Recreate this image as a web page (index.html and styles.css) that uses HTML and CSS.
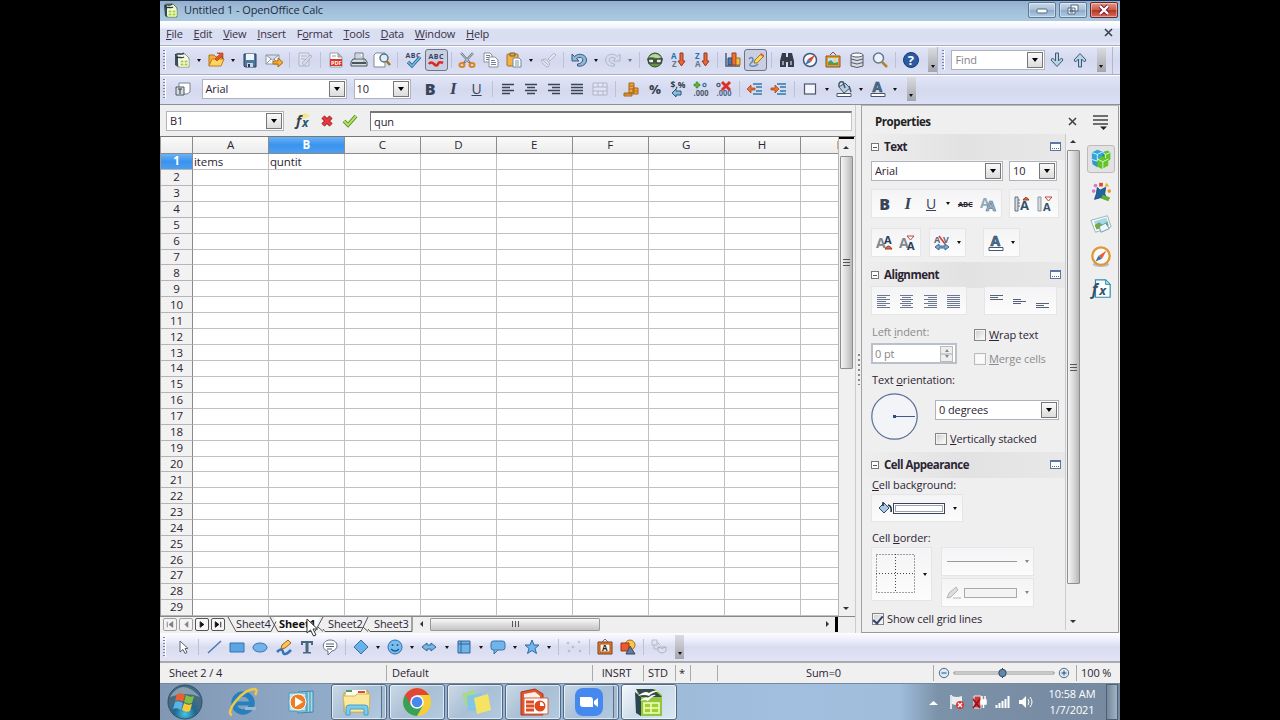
FILE: index.html
```html
<!DOCTYPE html>
<html lang="en">
<head>
    <meta charset="UTF-8">
    <meta name="viewport" content="width=device-width, initial-scale=1.0">
    <title>Untitled 1 - OpenOffice Calc</title>
    <link rel="stylesheet" href="styles.css">
</head>
<body>
<div class="window">
    <!-- Title bar -->
    <header class="titlebar">
        <svg class="app-icon" width="14" height="16" viewBox="0 0 14 16"><path d="M1 2h8l4 4v9H3z" fill="#eef3dc" stroke="#69813b"/><path d="M0 3l3 1v11l-2-1z" fill="#344b55"/><path d="M1 4c3-3 4 1 7-2M2 6c3-2 4 1 7-1" stroke="#273440" fill="none" stroke-width="1.4"/><path d="M4 8h8v6H4zM4 11h8M8 8v6" fill="#a8d431" stroke="#f9ffe0"/></svg>
        <span class="title">Untitled 1 - OpenOffice Calc</span>
        <div class="win-buttons">
            <div class="win-btn"><svg width="12" height="8" viewBox="0 0 12 8"><rect x="1" y="3" width="10" height="4" rx="1" fill="#fff" stroke="#53677c"/></svg></div>
            <div class="win-btn"><svg width="14" height="12" viewBox="0 0 14 12"><path d="M5 1h7v6H5zM2 4h7v6H2z" fill="#f7fbff" stroke="#53677c"/><path d="M4 6h3v2H4z" fill="#7691ac" stroke="#53677c"/></svg></div>
            <div class="win-btn close"><svg width="12" height="10" viewBox="0 0 12 10"><path d="M2 1l8 8M10 1L2 9" stroke="#713" stroke-width="4"/><path d="M2 1l8 8M10 1L2 9" stroke="#fff" stroke-width="2.4"/></svg></div>
        </div>
    </header>

    <!-- Menu -->
    <nav class="menubar">
        <a><u>F</u>ile</a><a><u>E</u>dit</a><a><u>V</u>iew</a><a><u>I</u>nsert</a><a>F<u>o</u>rmat</a><a><u>T</u>ools</a><a><u>D</u>ata</a><a><u>W</u>indow</a><a><u>H</u>elp</a>
        <svg class="doc-close" width="9" height="9" viewBox="0 0 9 9"><path d="M1 1l7 7M8 1L1 8" stroke="#3d4054" stroke-width="1.6"/></svg>
    </nav>

    <!-- Standard toolbar -->
    <div class="toolbar standard">
        <span class="grip"></span>
        <span class="ic"><svg viewBox="0 0 20 20"><path d="M5 4h8l4 4v9H6z" fill="#f4f8e8" stroke="#8b9b6c"/><path d="M3 4l3 2v11l-3-2z" fill="#3c5058"/><path d="M3 5c4-3 5 1 9-2M4 8c3-2 5 1 8-1" stroke="#2d3b45" fill="none" stroke-width="1.3"/><path d="M8 10h8v6H8zM8 13h8M12 10v6" fill="#a7cc38" stroke="#fff"/></svg></span><span class="dd"></span>
        <span class="ic"><svg viewBox="0 0 20 20"><path d="M3 16V5h5l2 2h6v3" fill="#f1b23c" stroke="#b3731c"/><path d="M3 16l3-7h12l-3 7z" fill="#ffd45c" stroke="#bd7c1c"/><path d="M9 9l5-5-3-1h6v6l-1-3-5 5z" fill="#e3562b" stroke="#a83416" stroke-width=".6"/></svg></span><span class="dd"></span>
        <span class="ic"><svg viewBox="0 0 20 20"><path d="M4 4h12v13H5l-1-1z" fill="#4e789f" stroke="#243f5d"/><path d="M6 4h8v6H6z" fill="#edf4fa"/><path d="M7 13h6v4H7z" fill="#cbd6e2"/><path d="M8 14h2v3H8z" fill="#223a57"/></svg></span>
        <span class="ic"><svg viewBox="0 0 20 20"><path d="M2 5h13v9H2zM2 5l6.500 5L15 5M2 14l5-5M15 14l-5-5" fill="#fbfcfd" stroke="#8a94a3"/><path d="M9 11h5V8l5 4.500-5 4.500v-3H9z" fill="#f6ae31" stroke="#a7651b"/></svg></span><span class="sep"></span>
        <span class="ic off"><svg viewBox="0 0 20 20"><path d="M4 3h10v13H4zM6 6h6M6 9h4" fill="#e8ebf2" stroke="#878da0"/><path d="M7 13l2 3 8-10-2-1z" fill="#d6d9e1" stroke="#888ea0"/></svg></span><span class="sep"></span>
        <span class="ic"><svg viewBox="0 0 20 20"><path d="M4 3h8l4 4v10H4z" fill="#fff" stroke="#98a0ac"/><path d="M12 3v4h4zM6 6h4" fill="#b5bdc9" stroke="#949ba7"/><path d="M4 9h12v7H4z" fill="#dc3529"/><text x="5" y="14.800" font-size="5.500" font-weight="bold" fill="#fff">PDF</text></svg></span>
        <span class="ic"><svg viewBox="0 0 20 20"><path d="M6 3h8v7H6z" fill="#fff" stroke="#657384"/><path d="M7 5h5M7 7h6" stroke="#9babbb"/><path d="M4 9h12l2 3v4H2v-4z" fill="#d7dce2" stroke="#48535f"/><path d="M3 13h14" stroke="#48535f" stroke-width="2"/><circle cx="15" cy="11" r=".8" fill="#65b43b"/></svg></span>
        <span class="ic"><svg viewBox="0 0 20 20"><path d="M4 3h9v14H2V5z" fill="#fff" stroke="#7d8998"/><circle cx="12" cy="8" r="4" fill="#dceef9" stroke="#5e7180" stroke-width="1.5"/><path d="M14.500 11l3.500 4" stroke="#a1702c" stroke-width="2.500"/></svg></span><span class="sep"></span>
        <span class="ic"><svg viewBox="0 0 20 20"><text x="2.500" y="8" font-size="7" font-weight="bold" fill="#31435e" textLength="15">ABC</text><path d="M5 12l4 4 8-9" fill="none" stroke="#27608f" stroke-width="3.200"/><path d="M5 12l4 4 8-9" fill="none" stroke="#78b8e5" stroke-width="1.600"/></svg></span>
        <span class="ic pressed"><svg viewBox="0 0 20 20"><text x="2.500" y="9" font-size="7" font-weight="bold" fill="#31435e" textLength="15">ABC</text><path d="M3 14q2-3 5 0t4 0 5-1" fill="none" stroke="#d92b23" stroke-width="2.600"/></svg></span><span class="sep"></span>
        <span class="ic"><svg viewBox="0 0 20 20"><path d="M4 3l10 11M16 3L6 14" stroke="#637181" stroke-width="2.200"/><path d="M4 3l8 9M16 3l-8 9" stroke="#e4e9ed" stroke-width=".8"/><ellipse cx="5" cy="15" rx="2.500" ry="2" fill="none" stroke="#df8225" stroke-width="2"/><ellipse cx="15" cy="15" rx="2.500" ry="2" fill="none" stroke="#df8225" stroke-width="2"/></svg></span>
        <span class="ic"><svg viewBox="0 0 20 20"><path d="M3 3h6l2 2v7H3z" fill="#fff" stroke="#87909d"/><path d="M5 5.500h4M5 7.500h4M5 9.500h4" stroke="#71849a"/><path d="M8 7h6l3 3v7H8z" fill="#fff" stroke="#87909d"/><path d="M10 10.500h4M10 12.500h5M10 14.500h5" stroke="#71849a"/></svg></span>
        <span class="ic"><svg viewBox="0 0 20 20"><rect x="3" y="4" width="11" height="12" rx="1" fill="#f3b344" stroke="#a37022"/><path d="M6 3h5v3H6z" fill="#d1a454" stroke="#7e6030"/><path d="M9 8h6l2 2v7H9z" fill="#fff" stroke="#728a9c"/><path d="M11 11h4M11 13h4M11 15h4" stroke="#7798ae"/></svg></span><span class="dd"></span>
        <span class="ic off"><svg viewBox="0 0 20 20"><path d="M16 3l2 2-6 6-2-2zM3 10l5-1 4 5-2 3c-3 0-5-3-7-7zM5 10l5 5" fill="#e7e9ef" stroke="#8d93a2"/></svg></span><span class="sep"></span>
        <span class="ic"><svg viewBox="0 0 20 20"><path d="M3 4v7h7L7.500 8.500C11 6 15 8 13.500 11c-1 2-3 3-5 3v2c5 1 9-2 9-6 0-5-7-8-12-3.500z" fill="#8eb9dc" stroke="#36567b"/></svg></span><span class="dd"></span>
        <span class="ic off"><svg viewBox="0 0 20 20"><path d="M17 4v7h-7l2.500-2.500C9 6 5 8 6.500 11c1 2 3 3 5 3v2c-5 1-9-2-9-6 0-5 7-8 12-3.500z" fill="#d8dde6" stroke="#8792a4"/></svg></span><span class="dd off"></span><span class="sep"></span>
        <span class="ic"><svg viewBox="0 0 20 20"><circle cx="10" cy="10" r="7" fill="#65943f" stroke="#374d3b"/><path d="M4 7q6-6 12 0l-3 2-5-2z" fill="#bcd6a2"/><path d="M3 9h6v4H4zM11 9h6l-1 4h-5zM8 11h4" fill="#e9efed" stroke="#38493d" stroke-width="1.400"/></svg></span>
        <span class="ic"><svg viewBox="0 0 20 20"><text x="3" y="9" font-size="8" font-weight="bold" fill="#2574ae">A</text><text x="4" y="17" font-size="8" font-weight="bold" fill="#65768a">Z</text><path d="M12 3h3v8h2l-3.500 5-3.500-5h2z" fill="#e86734" stroke="#9b3b1c"/></svg></span>
        <span class="ic"><svg viewBox="0 0 20 20"><text x="3" y="9" font-size="8" font-weight="bold" fill="#2574ae">Z</text><text x="3" y="17" font-size="8" font-weight="bold" fill="#65768a">A</text><path d="M12 3h3v8h2l-3.500 5-3.500-5h2z" fill="#e86734" stroke="#9b3b1c"/></svg></span><span class="sep"></span>
        <span class="ic"><svg viewBox="0 0 20 20"><path d="M3 3v13h14" fill="none" stroke="#515c6d" stroke-width="1.500"/><path d="M5 8h4v7H5z" fill="#3f7eb8" stroke="#244b76"/><path d="M9 3h4v12H9z" fill="#f17030" stroke="#9f3d18"/><path d="M13 8h4v7h-4z" fill="#f6bd45" stroke="#9d6e20"/></svg></span>
        <span class="ic pressed"><svg viewBox="0 0 20 20"><path d="M3 9c3-4 6 1 2 4s3 5 7 1" fill="none" stroke="#6587bb" stroke-width="1.500"/><path d="M8 13l1-3 6-6 3 2-7 7z" fill="#ffd85c" stroke="#9c752c"/><path d="M14 5l1-2 3 2-1 2z" fill="#df654e"/></svg></span><span class="sep"></span>
        <span class="ic"><svg viewBox="0 0 20 20"><path d="M5 3h4v4h2V3h4l2 8v6h-6v-5H9v5H3v-6z" fill="#343d49"/><path d="M5 11h2v4H5zM13 11h2v4h-2z" fill="#929daa"/></svg></span>
        <span class="ic"><svg viewBox="0 0 20 20"><circle cx="10" cy="10" r="6.500" fill="#f7fbff" stroke="#405979" stroke-width="1.500"/><path d="M15 5l-4 7-3-3z" fill="#e93d28"/><path d="M5 15l3-6 3 3z" fill="#4678b0"/></svg></span>
        <span class="ic"><svg viewBox="0 0 20 20"><path d="M7 5l3-3 3 3" fill="none" stroke="#74563a"/><path d="M3 6h14v11H3z" fill="#e7973a" stroke="#8b541f"/><path d="M5 8h10v7H5z" fill="#bce4f7"/><path d="M5 15v-3l3-2 3 3 4-1v3z" fill="#5b9752"/><circle cx="12" cy="10" r="1.500" fill="#f7d64c"/></svg></span>
        <span class="ic"><svg viewBox="0 0 20 20"><path d="M4 5v11q6 3 12 0V5" fill="#d8dce2" stroke="#4f5b68"/><ellipse cx="10" cy="5" rx="6" ry="2" fill="#fff" stroke="#4f5b68"/><path d="M4 9q6 3 12 0M4 12.500q6 3 12 0" fill="none" stroke="#4f5b68"/></svg></span>
        <span class="ic"><svg viewBox="0 0 20 20"><circle cx="8.500" cy="8" r="5" fill="#e8f2fb" stroke="#66788e" stroke-width="1.500"/><path d="M12 12l5 5" stroke="#b38132" stroke-width="2.500"/></svg></span><span class="sep"></span>
        <span class="ic"><svg viewBox="0 0 20 20"><circle cx="10" cy="10" r="7.500" fill="#2d5ba3" stroke="#173b71"/><text x="6.700" y="15" font-size="13" font-weight="bold" fill="#fff">?</text></svg></span>
        <span class="overflow"></span>
        <div class="find-bar">
            <span class="grip"></span>
            <div class="combo find"><span>Find</span><b></b></div>
            <span class="ic"><svg viewBox="0 0 20 20"><path d="M8.500 3h3v8l3-3 1.500 2-6 6.500L4 10l1.500-2 3 3z" fill="#b9d2e4" stroke="#3d5b76"/></svg></span>
            <span class="ic"><svg viewBox="0 0 20 20"><path d="M8.500 17h3V9l3 3 1.500-2L10 3.500 4 10l1.500 2 3-3z" fill="#b9d2e4" stroke="#3d5b76"/></svg></span>
            <span class="overflow"></span>
        </div>
    </div>

    <!-- Formatting toolbar -->
    <div class="toolbar formatting">
        <span class="grip"></span>
        <span class="ic"><svg viewBox="0 0 20 20"><path d="M6 4h11v9l-3 2H6z" fill="#fff" stroke="#7d8590"/><path d="M3 8h8v8H3z" fill="#d8dce3" stroke="#4c5663"/><path d="M5 10h4M7 10v5" stroke="#303842"/></svg></span>
        <div class="combo font-name"><span>Arial</span><b></b></div>
        <div class="combo font-size"><span>10</span><b></b></div>
        <span class="ic glyph bold">B</span><span class="ic glyph italic">I</span><span class="ic glyph underline">U</span><span class="sep"></span>
        <span class="ic"><svg viewBox="0 0 20 20"><path d="M4 5.500h12M4 8.500h8M4 11.500h12M4 14.500h8" stroke="#3b4356" stroke-width="1.300"/></svg></span>
        <span class="ic"><svg viewBox="0 0 20 20"><path d="M4 5.500h12M6 8.500h8M4 11.500h12M6 14.500h8" stroke="#3b4356" stroke-width="1.300"/></svg></span>
        <span class="ic"><svg viewBox="0 0 20 20"><path d="M4 5.500h12M8 8.500h8M4 11.500h12M8 14.500h8" stroke="#3b4356" stroke-width="1.300"/></svg></span>
        <span class="ic"><svg viewBox="0 0 20 20"><path d="M4 5.500h12M4 8.500h12M4 11.500h12M4 14.500h12" stroke="#3b4356" stroke-width="1.300"/></svg></span>
        <span class="ic off"><svg viewBox="0 0 20 20"><path d="M3 4h14v12H3zM3 8h14M3 12h14M8 4v4M13 4v4M8 12v4M13 12v4" fill="#eceff5" stroke="#878fa0"/></svg></span><span class="sep"></span>
        <span class="ic"><svg viewBox="0 0 20 20"><path d="M8 4h5v10H8zM12 9h5v6h-5zM3 14h8v3H3z" fill="#f1a437" stroke="#a4641d"/><path d="M8 7h5M8 10h4M12 12h5M3 15h8" stroke="#ad6c21"/></svg></span>
        <span class="ic"><svg viewBox="0 0 20 20"><text x="4" y="15" font-size="13" font-weight="bold" fill="#333d4c" textLength="12" lengthAdjust="spacingAndGlyphs">%</text></svg></span>
        <span class="ic"><svg viewBox="0 0 20 20"><text x="2.500" y="9" font-size="9" font-weight="bold" fill="#333d4c" textLength="15" lengthAdjust="spacingAndGlyphs">$,%</text><path d="M4 14l4-4v2h5v4H8v2z" fill="#84badc" stroke="#285781"/></svg></span>
        <span class="ic"><svg viewBox="0 0 20 20"><path d="M3 5h2V3h2v2h2v2H7v2H5V7H3z" fill="#5dbb2e" stroke="#29721c" stroke-width=".5"/><circle cx="13.500" cy="6" r="1.600" fill="none" stroke="#3574ae" stroke-width="1.300"/><text x="2.500" y="17" font-size="8" font-weight="bold" fill="#4d596b" textLength="15" lengthAdjust="spacingAndGlyphs">.000</text></svg></span>
        <span class="ic"><svg viewBox="0 0 20 20"><circle cx="4.500" cy="6" r="1.600" fill="none" stroke="#4d596b" stroke-width="1.300"/><text x="2.500" y="17" font-size="8" font-weight="bold" fill="#4d6590" textLength="15" lengthAdjust="spacingAndGlyphs">.000</text><path d="M8 3l8 8M16 3l-8 8" stroke="#db3027" stroke-width="3"/></svg></span><span class="sep"></span>
        <span class="ic"><svg viewBox="0 0 20 20"><path d="M8 5h9M11 8h6M11 12h6M8 15h9" stroke="#3179a7" stroke-width="1.500"/><path d="M2 10l4-4v3h4v2H6v3z" fill="#ed7032" stroke="#9f3c17" stroke-width=".7"/></svg></span>
        <span class="ic"><svg viewBox="0 0 20 20"><path d="M8 5h9M11 8h6M11 12h6M8 15h9" stroke="#3179a7" stroke-width="1.500"/><path d="M10 10L6 6v3H2v2h4v3z" fill="#ed7032" stroke="#9f3c17" stroke-width=".7"/></svg></span><span class="sep"></span>
        <span class="ic"><svg viewBox="0 0 20 20"><rect x="4.500" y="5" width="11" height="10" fill="#f4f6fc" stroke="#4c5869" stroke-width="1.200"/></svg></span><span class="dd"></span>
        <span class="ic"><svg viewBox="0 0 20 20"><path d="M5 8l6-4 5 5-6 5z" fill="#b9cedc" stroke="#42586c"/><path d="M5 8q-1-6 4-5l2 6M15 7l2 6" fill="none" stroke="#42586c" stroke-width="1.500"/><path d="M3 14.500h14v3H3z" fill="#fff" stroke="#42586c"/></svg></span><span class="dd"></span>
        <span class="ic"><svg viewBox="0 0 20 20"><text x="4.500" y="13" font-size="14" font-weight="bold" fill="#4a7694" stroke="#273e59" stroke-width=".6">A</text><path d="M3 14.500h14v3H3z" fill="#fff" stroke="#42586c"/></svg></span><span class="dd"></span>
        <span class="overflow"></span>
    </div>

    <main class="workspace">
        <section class="document">
            <!-- Formula bar -->
            <div class="formula-bar">
                <div class="combo name-box"><span>B1</span><b></b></div>
                <span class="ic"><svg viewBox="0 0 20 20"><path d="M5 4l8-2 4 3-7 3z" fill="#f4e68a"/><text x="3" y="15" font-size="14" font-style="italic" font-weight="bold" fill="#36404b">f</text><text x="9" y="16" font-size="12" font-style="italic" font-weight="bold" fill="#2c5573">x</text></svg></span>
                <span class="ic"><svg viewBox="0 0 20 20"><path d="M6 6l8 8M14 6l-8 8" stroke="#911c22" stroke-width="4.500"/><path d="M6 6l8 8M14 6l-8 8" stroke="#e6393c" stroke-width="3"/></svg></span>
                <span class="ic"><svg viewBox="0 0 20 20"><path d="M4 10l4 4 8-9" fill="none" stroke="#568a25" stroke-width="3.800"/><path d="M4 10l4 4 8-9" fill="none" stroke="#b1e35f" stroke-width="2"/></svg></span>
                <div class="formula-input">qun</div>
            </div>

            <!-- Sheet -->
            <div class="sheet-area">
                <div class="sheet" id="sheet"></div>
                <div class="vscroll">
                    <span class="split"></span>
                    <span class="arrow up"></span>
                    <span class="thumb"></span>
                    <span class="arrow down"></span>
                </div>
            </div>

            <!-- Sheet tabs -->
            <div class="tabs-row">
                <span class="nav-btn off"><svg viewBox="0 0 12 12"><path d="M3 3v6M9 3L5 6l4 3z"/></svg></span>
                <span class="nav-btn off"><svg viewBox="0 0 12 12"><path d="M8 3L5 6l3 3z"/></svg></span>
                <span class="nav-btn"><svg viewBox="0 0 12 12"><path d="M4 3l4 3-4 3z"/></svg></span>
                <span class="nav-btn"><svg viewBox="0 0 12 12"><path d="M3 3l4 3-4 3zM9 3v6"/></svg></span>
                <div class="tabs">
                    <svg class="tab-lines" width="185" height="16" viewBox="0 0 185 16"><path d="M46 0l8 15h32l6-15z" fill="#fff"/><path d="M0 0l8 14.500h35l5-10M42 0l8 14.500h37L95 0M95 12l2 2.500h36L140 0M140 12l2 2.500h42V0M90 10l5 4.500M135 10l5 4.500" fill="none" stroke="#555"/></svg>
                    <span class="tab t4">Sheet4</span><span class="tab active">Sheet1</span><span class="tab t2">Sheet2</span><span class="tab t3">Sheet3</span>
                    <svg class="cursor" width="13" height="20" viewBox="0 0 13 20"><path d="M1 1v14l3.500-3 3 6 2.500-1-3-6h4.500z" fill="#fff" stroke="#333"/></svg>
                </div>
                <div class="hscroll">
                    <span class="arrow left"></span><span class="hthumb"></span><span class="arrow right"></span>
                </div>
            </div>
        </section>

        <div class="splitter"><i></i></div>

        <!-- Properties sidebar -->
        <aside class="sidebar">
            <div class="panel">
                <div class="panel-title"><span>Properties</span><svg width="9" height="9" viewBox="0 0 9 9"><path d="M1 1l7 7M8 1L1 8" stroke="#444" stroke-width="1.600"/></svg></div>
                <div class="panel-body">
                    <div class="panel-content">
                        <div class="section-title first"><i class="minus"></i><span>Text</span><i class="more"></i></div>
                        <div class="row fonts">
                            <div class="combo side-font"><span>Arial</span><b></b></div>
                            <div class="combo side-size"><span>10</span><b></b></div>
                        </div>
                        <div class="row styles-row">
                            <div class="group g-style"><span class="ic glyph bold">B</span><span class="ic glyph italic">I</span><span class="ic glyph underline">U</span><span class="dd"></span><span class="ic strike">ABC</span><span class="ic"><svg viewBox="0 0 20 20"><text x="2" y="14" font-size="14" font-weight="bold" fill="#8dabc0">A</text><text x="8" y="17" font-size="14" font-weight="bold" fill="#9db7c9" stroke="#526b82" stroke-width=".6">A</text></svg></span></div>
                            <div class="group g-size"><span class="ic"><svg viewBox="0 0 20 20"><path d="M3 3h3v14H3zM6 6h2M6 9h2M6 12h2" fill="#d7dde3" stroke="#617081"/><text x="8" y="16" font-size="13" font-weight="bold" fill="#32516a">A</text><path d="M11 6q3-5 6 0z" fill="#e86b3b" stroke="#943a22"/></svg></span><span class="ic"><svg viewBox="0 0 20 20"><path d="M3 3h3v14H3z" fill="#d7dde3" stroke="#8c98a4"/><text x="8" y="17" font-size="11" font-weight="bold" fill="#32516a">A</text><path d="M10 3h7l-3.500 4z" fill="#fff" stroke="#bd4637"/></svg></span></div>
                        </div>
                        <div class="row styles-row second">
                            <div class="group g-super"><span class="ic"><svg viewBox="0 0 20 20"><text x="1" y="15" font-size="14" font-weight="bold" fill="#7e8992">A</text><text x="9" y="11" font-size="11" font-weight="bold" fill="#263f56">A</text><path d="M10 16q3.500-6 7 0z" fill="#ea6c44" stroke="#943a22"/></svg></span><span class="ic"><svg viewBox="0 0 20 20"><text x="1" y="15" font-size="14" font-weight="bold" fill="#7e8992">A</text><text x="9" y="17" font-size="11" font-weight="bold" fill="#263f56">A</text><path d="M9 3h7l-3.500 4z" fill="#fff" stroke="#bd4637"/></svg></span></div>
                            <div class="group g-spacing"><span class="ic"><svg viewBox="0 0 20 20"><text x="2" y="10" font-size="9" font-weight="bold" fill="#5d6977">A</text><text x="11" y="10" font-size="9" font-weight="bold" fill="#5d6977">V</text><path d="M7 3l6 8" stroke="#dc383a" stroke-width="1.500"/><path d="M3 14l4-3v2h6v-2l4 3-4 3v-2H7v2z" fill="#7daed2" stroke="#386890"/></svg></span><span class="dd"></span></div>
                            <div class="group g-color"><span class="ic"><svg viewBox="0 0 20 20"><text x="4.500" y="13" font-size="14" font-weight="bold" fill="#4a7694" stroke="#273e59" stroke-width=".6">A</text><path d="M3 14.500h14v3H3z" fill="#fff" stroke="#42586c"/></svg></span><span class="dd"></span></div>
                        </div>

                        <div class="section-title"><i class="minus"></i><span>Alignment</span><i class="more"></i></div>
                        <div class="row align-row">
                            <div class="group g-align">
                                <span class="ic"><svg viewBox="0 0 20 20"><path d="M3 4.500h13M3 6.500h9M3 8.500h13M3 10.500h9M3 12.500h13M3 14.500h9M3 16.500h13" stroke="#6b7790"/></svg></span>
                                <span class="ic"><svg viewBox="0 0 20 20"><path d="M3 4.500h13M5 6.500h9M3 8.500h13M5 10.500h9M3 12.500h13M5 14.500h9M3 16.500h13" stroke="#6b7790"/></svg></span>
                                <span class="ic"><svg viewBox="0 0 20 20"><path d="M3 4.500h13M7 6.500h9M3 8.500h13M7 10.500h9M3 12.500h13M7 14.500h9M3 16.500h13" stroke="#6b7790"/></svg></span>
                                <span class="ic"><svg viewBox="0 0 20 20"><path d="M3 4.500h13M3 6.500h13M3 8.500h13M3 10.500h13M3 12.500h13M3 14.500h13M3 16.500h13" stroke="#6b7790"/></svg></span>
                            </div>
                            <div class="group g-valign">
                                <span class="ic"><svg viewBox="0 0 20 20"><path d="M3 4.500h13M3 6.500h8M3 8.500h13" stroke="#53617a"/></svg></span>
                                <span class="ic"><svg viewBox="0 0 20 20"><path d="M3 8.500h8M3 10.500h13M3 12.500h8" stroke="#53617a"/></svg></span>
                                <span class="ic"><svg viewBox="0 0 20 20"><path d="M3 12.500h13M3 14.500h8M3 16.500h13" stroke="#53617a"/></svg></span>
                            </div>
                        </div>
                        <div class="row indent-row">
                            <div class="indent">
                                <label class="muted">Left <u>i</u>ndent:</label>
                                <div class="spin"><span>0 pt</span><b><i></i><i></i></b></div>
                            </div>
                            <div class="checks">
                                <label><i class="check"></i><span><u>W</u>rap text</span></label>
                                <label class="muted"><i class="check plain"></i><span><u>M</u>erge cells</span></label>
                            </div>
                        </div>
                        <label class="caption orient-label">Text <u>o</u>rientation:</label>
                        <div class="row orient-row">
                            <svg width="47" height="47" viewBox="0 0 47 47"><circle cx="23.500" cy="23.500" r="22.700" fill="#f3f4f8" stroke="#596d96" stroke-width="1.200"/><path d="M23 23.500h21" stroke="#3f5a8d"/><path d="M22 22h3v3h-3z" fill="#314c80"/></svg>
                            <div class="orient-controls">
                                <div class="combo degrees"><span>0 degrees</span><b></b></div>
                                <label class="check-label"><i class="check"></i><span><u>V</u>ertically stacked</span></label>
                            </div>
                        </div>

                        <div class="section-title third"><i class="minus"></i><span>Cell Appearance</span><i class="more"></i></div>
                        <label class="caption bg-label"><u>C</u>ell background:</label>
                        <div class="group g-bg"><svg width="14" height="14" viewBox="0 0 14 14"><path d="M1 7l5-5 5 5-5 5z" fill="#a9c7e6" stroke="#344a69"/><path d="M5 5V1M10 4q4 1 3 7" stroke="#1c2b40" fill="none" stroke-width="1.500"/></svg><i class="swatch"></i><span class="dd"></span></div>
                        <label class="caption border-label">Cell <u>b</u>order:</label>
                        <div class="row border-row">
                            <div class="group g-border"><svg width="40" height="40" viewBox="0 0 40 40"><path d="M.5.5h38v38H.5zM19.500 0v39M0 19.500h39" fill="none" stroke="#444" stroke-dasharray="1 2"/></svg><span class="dd"></span></div>
                            <div class="line-groups">
                                <div class="group"><i class="line"></i><span class="dd off"></span></div>
                                <div class="group"><svg width="16" height="14" viewBox="0 0 16 14"><path d="M1 12l2-5 7-6 2 3-7 7zM7 12h8" fill="#ddd" stroke="#b5b5b5"/></svg><i class="line-color"></i><span class="dd off"></span></div>
                            </div>
                        </div>
                        <label class="check-label grid-check"><i class="check checked"></i><span>Show cell grid lines</span></label>
                    </div>
                    <div class="pscroll"><span class="arrow up"></span><span class="thumb"></span><span class="arrow down"></span></div>
                </div>
            </div>
            <div class="deck">
                <svg class="deck-menu" width="18" height="18" viewBox="0 0 18 18"><path d="M1 3h15M1 7h15M1 11h15" stroke="#444" stroke-width="1.500"/><path d="M8 13.500h7L11.500 17z" fill="#222"/></svg>
                <span class="deck-btn selected"><svg viewBox="0 0 24 24"><path d="M2 5l6-3 6 2v7l-5 3-7-2z" fill="#32a4dc"/><path d="M14 5l5-2 3 2v7l-6 2-3-3z" fill="#1e83bd"/><path d="M8 12l6-3 6 3v7l-7 4-6-3z" fill="#64c51c"/><path d="M15 4l4-1 3 2v8l-6 2z" fill="#64c51c"/><path d="M2 13l6 2v6l-5-3z" fill="#279ad5"/><path d="M2 5l6 2 6-3M8 7v7M8 12l6 3 6-3M14 15v8M14 5l3 2 5-2M17 7v4" fill="none" stroke="#d5f5ff"/></svg></span>
                <span class="deck-btn"><svg viewBox="0 0 24 24"><g fill="#d879ca"><circle cx="4" cy="11" r="2"/><circle cx="6" cy="5" r="2"/></g><path d="M10 2h4v4h-4z" fill="#de4a2f"/><path d="M18 2l3 4h-5z" fill="#edac26"/><circle cx="21" cy="11" r="2" fill="#e9942f"/><path d="M8 7l3 3 6-3-1 7 3 6-7-2-7 2 2-6z" fill="#20679f" stroke="#184b75"/><path d="M14 15l8 3-2 4-8-3z" fill="#66ad38"/></svg></span>
                <span class="deck-btn"><svg viewBox="0 0 24 24"><path d="M1 8l18-5 4 12-17 6z" fill="#fff" stroke="#93adb7"/><path d="M4 9l14-4 3 9-13 4z" fill="#a7d8ef"/><path d="M5 13l5-3 4 3 5-4 1 5-13 4z" fill="#78ab3e"/><path d="M10 15l7-4 4 6-9 4z" fill="#eef7fb" stroke="#6698ac"/></svg></span>
                <span class="deck-btn"><svg viewBox="0 0 24 24"><ellipse cx="12" cy="20" rx="9" ry="3" fill="#bbb"/><circle cx="12" cy="11" r="9.500" fill="#f4faff" stroke="#e3972d" stroke-width="2.500"/><path d="M18 5l-5 9-4-3z" fill="#e85f37"/><path d="M6 17l3-6 4 3z" fill="#386fac"/></svg></span>
                <span class="deck-btn"><svg viewBox="0 0 24 24"><path d="M6 2h11l5 5v14H6z" fill="#fff" stroke="#288dad" stroke-width="1.300"/><path d="M17 2v5h5z" fill="#bfe4ee" stroke="#288dad"/><text x="2" y="18" font-size="17" font-style="italic" font-weight="bold" fill="#345270">f</text><text x="10" y="18" font-size="14" font-style="italic" font-weight="bold" fill="#345270">x</text></svg></span>
            </div>
        </aside>
    </main>

    <!-- Drawing toolbar -->
    <div class="toolbar drawing">
        <span class="grip"></span>
        <span class="ic"><svg viewBox="0 0 20 20"><path d="M7 4v11l3-2.500 2 4 2-1-2-4h3z" fill="#fff" stroke="#5d6370"/></svg></span><span class="sep"></span>
        <span class="ic"><svg viewBox="0 0 20 20"><path d="M4 16L17 4" stroke="#4c79ad" stroke-width="1.500"/></svg></span>
        <span class="ic"><svg viewBox="0 0 20 20"><path d="M3 6h14v9H3z" fill="#5ba5e4" stroke="#3474af"/></svg></span>
        <span class="ic"><svg viewBox="0 0 20 20"><ellipse cx="10" cy="10.500" rx="7" ry="4.500" fill="#72b4e9" stroke="#3474af"/></svg></span>
        <span class="ic"><svg viewBox="0 0 20 20"><path d="M3 15q5-5 6 0t8-2" fill="none" stroke="#3477b8" stroke-width="2.500"/><path d="M7 12l1-4 6-5 3 3-6 5z" fill="#ffc451" stroke="#996320"/></svg></span>
        <span class="ic"><svg viewBox="0 0 20 20"><path d="M4 4h12v4h-2V6h-2.500v9H14v1.500H6V15h2.500V6H6v2H4z" fill="#4a6784"/></svg></span>
        <span class="ic"><svg viewBox="0 0 20 20"><path d="M10 3c9 0 9 10 2 11l-4 4v-4C1 13 2 3 10 3z" fill="#fff" stroke="#657384"/><path d="M6 7h8M6 9.500h8M7 12h5" stroke="#526176"/></svg></span><span class="sep"></span>
        <span class="ic"><svg viewBox="0 0 20 20"><path d="M10 3l7 7-7 7-7-7z" fill="#69b1e8" stroke="#326fa7"/></svg></span><span class="dd"></span>
        <span class="ic"><svg viewBox="0 0 20 20"><circle cx="10" cy="10" r="7" fill="#78bdf0" stroke="#306faa"/><path d="M6 12q4 4 8 0" fill="none" stroke="#225b91" stroke-width="1.300"/><circle cx="7.500" cy="8" r="1" fill="#225b91"/><circle cx="12.500" cy="8" r="1" fill="#225b91"/></svg></span><span class="dd"></span>
        <span class="ic"><svg viewBox="0 0 20 20"><path d="M3 10l5-4v2h4V6l5 4-5 4v-2H8v2z" fill="#77b8e8" stroke="#2f6496"/></svg></span><span class="dd"></span>
        <span class="ic"><svg viewBox="0 0 20 20"><path d="M4 4h12v12H4zM7 4v12M4 7h12" fill="#70b4ea" stroke="#2f6496"/></svg></span><span class="dd"></span>
        <span class="ic"><svg viewBox="0 0 20 20"><rect x="3" y="4" width="14" height="9" rx="2.500" fill="#70b4ea" stroke="#3374aa"/><path d="M6 13v4l4-4" fill="#70b4ea" stroke="#3374aa"/></svg></span><span class="dd"></span>
        <span class="ic"><svg viewBox="0 0 20 20"><path d="M10 3l2 5h5l-4 3.500 1.500 5L10 13.500l-4.500 3 1.500-5L3 8h5z" fill="#71b5ec" stroke="#2c6ba5"/></svg></span><span class="dd"></span><span class="sep"></span>
        <span class="ic off"><svg viewBox="0 0 20 20"><g fill="#999fae"><circle cx="4" cy="6" r="1.300"/><circle cx="5" cy="14" r="1.300"/><circle cx="9" cy="10" r="1.300"/><circle cx="15" cy="5" r="1.300"/><circle cx="16" cy="14" r="1.300"/></g></svg></span><span class="sep"></span>
        <span class="ic"><svg viewBox="0 0 20 20"><path d="M7 5l3-3 3 3" fill="none" stroke="#8d6b46"/><path d="M3 5h14v12H3z" fill="#e68232" stroke="#743d20"/><path d="M5 7h10v8H5z" fill="#fff5dd" stroke="#a35124"/><text x="7" y="14" font-size="8" font-weight="bold" fill="#222">A</text></svg></span>
        <span class="ic"><svg viewBox="0 0 20 20"><circle cx="12" cy="8" r="5" fill="#ffc447" stroke="#9b742b"/><path d="M3 6h8v8H3z" fill="#ea5b2b" stroke="#9f3418"/><path d="M12 9l5 8H8z" fill="#647b99" stroke="#344963"/></svg></span><span class="sep"></span>
        <span class="ic off"><svg viewBox="0 0 20 20"><path d="M3 3h5v5H3zM5 8v4h4M8 5l3 3M9 10h8v4q-4 4-8 0zM9 10q4 3 8 0" fill="#e0e2e8" stroke="#888e9e"/></svg></span>
        <span class="overflow"></span>
    </div>

    <!-- Status bar -->
    <footer class="statusbar">
        <span class="st-sheet">Sheet 2 / 4</span>
        <span class="st-style">Default</span>
        <span class="st-insert">INSRT</span>
        <span class="st-std">STD</span>
        <span class="st-mod">*</span>
        <span class="st-sign"></span>
        <span class="st-sum">Sum=0</span>
        <div class="st-zoom"><svg width="132" height="14" viewBox="0 0 132 14"><g fill="#dbe9f5" stroke="#526b85"><circle cx="7" cy="7" r="4.700"/><circle cx="127" cy="7" r="4.700"/></g><path d="M4.500 7h5M124.500 7h5M127 4.500v5" stroke="#294c70"/><path d="M17 6h100v2H17z" fill="#fff" stroke="#777" stroke-width=".8"/><path d="M65.500 2v10" stroke="#333"/><circle cx="65.500" cy="7" r="3.700" fill="#6387a8" stroke="#2f4b66"/></svg></div>
        <span class="st-pct">100 %</span>
    </footer>

    <!-- Windows taskbar -->
    <div class="taskbar">
        <div class="start"><svg width="36" height="36" viewBox="0 0 36 36"><defs><radialGradient id="orb" cx="50%" cy="85%"><stop offset="0" stop-color="#43c5e5"/><stop offset=".6" stop-color="#23678f"/><stop offset="1" stop-color="#456b83"/></radialGradient></defs><circle cx="18" cy="18" r="17" fill="url(#orb)" stroke="#2b4f6e"/><path d="M3 13Q15-7 33 13q-14-6-30 0" fill="#fff" opacity=".35"/><path d="M10 10q4-2 8 1l-2 7q-4-3-8-1z" fill="#e95f31"/><path d="M19 11q4 3 8 1l-2 7q-4 2-8-1z" fill="#85bd3c"/><path d="M8 18q4-2 8 1l-2 7q-4-3-8-1z" fill="#56b4e9"/><path d="M17 19q4 3 8 1l-2 7q-4 2-8-1z" fill="#fcc936"/></svg></div>
        <div class="pin"><svg width="32" height="32" viewBox="0 0 32 32"><circle cx="16" cy="17" r="9" fill="none" stroke="#2580bd" stroke-width="5.500"/><path d="M10 17.500h17" stroke="#2580bd" stroke-width="4"/><path d="M18 21h11v3H18z" fill="#9fb8d2"/><path d="M5 29C-3 27 15 3 28 3q3 1 0 6" fill="none" stroke="#f0c942" stroke-width="2.500"/></svg></div>
        <div class="pin media"><svg width="28" height="26" viewBox="0 0 28 26"><path d="M11 3l15-1v21l-15 1z" fill="#a8d9ea" stroke="#388bac"/><path d="M20 2v22M23 2v22" stroke="#388bac"/><path d="M2 4h17v18H2z" fill="#bee4f2" stroke="#4a9aba"/><circle cx="11" cy="13" r="8" fill="#ef7d24" stroke="#fff"/><path d="M8 8l8 5-8 5z" fill="#fff"/></svg></div>
        <div class="task stacked"><svg width="32" height="30" viewBox="0 0 32 30"><path d="M3 6h10l2-2h12v21H3z" fill="#f3d777" stroke="#c1a14a"/><path d="M5 3h20v6H5z" fill="#fffef0"/><path d="M5 3h6v2H5z" fill="#4ca359"/><path d="M17 4h7v2h-7z" fill="#db4b38"/><path d="M2 9h12l2-2h13l-1 18H4z" fill="#fae99a" stroke="#d4b55d"/><path d="M5 28v-7q0-3 3-3h16q3 0 3 3v7h-4v-6H9v6z" fill="#7acced" stroke="#46a0ca"/></svg></div>
        <div class="task"><svg width="30" height="30" viewBox="0 0 30 30"><circle cx="15" cy="15" r="14" fill="#f8ce37"/><path d="M15 15L2.900 8A14 14 0 0 0 15 29l6-10.500z" fill="#36a15a"/><path d="M15 8h12.100A14 14 0 0 0 2.900 8L9 18.500z" fill="#df4839"/><circle cx="15" cy="15" r="6.800" fill="#fff"/><circle cx="15" cy="15" r="5.300" fill="#4688eb"/></svg></div>
        <div class="task"><svg width="34" height="28" viewBox="0 0 34 28"><path d="M4 6l12-4 6 13-13 5z" fill="#a7d987"/><path d="M9 8l15-3v17l-14 1z" fill="#83c4e9"/><path d="M16 10l14-4 3 16-14 4z" fill="#f5e363"/></svg></div>
        <div class="task"><svg width="32" height="30" viewBox="0 0 32 30"><path d="M4 5l14-3 8 5v21H4z" fill="#e6542e" stroke="#a6371c"/><path d="M7 7l11-2 5 4v15H7z" fill="#fff1e8"/><path d="M7 11h24v16H7z" fill="#fff" stroke="#e05b31"/><path d="M9 15h8M9 19h8M9 23h8" stroke="#d94d27" stroke-width="3"/><circle cx="23" cy="19" r="5.500" fill="#df4a20"/><path d="M23 19v-4a4 4 0 0 1 4 4z" fill="#fff"/></svg></div>
        <div class="task stacked"><svg width="28" height="28" viewBox="0 0 28 28"><rect width="28" height="28" rx="8" fill="#4589ee"/><path d="M5 9h10q3 0 3 3v7H8q-3 0-3-3zM19 13l4-3v9l-4-3z" fill="#fff"/></svg></div>
        <div class="task current"><svg width="30" height="30" viewBox="0 0 30 30"><path d="M3 2h18l7 6v21H6z" fill="#92c73d"/><path d="M1 5l6 5v19l-5-3z" fill="#29464e"/><path d="M2 2h17l9 8H7z" fill="#35494e"/><path d="M4 9q7-6 11-3 4-3 10-2-8 2-10 5-4-2-11 0M6 14q5-5 8-3 4-4 8-3-6 3-8 6-3-2-8 0" fill="#fff"/><path d="M10 16h15v10H10zM10 21h15M17 16v10" fill="#9fce36" stroke="#f5ffbc" stroke-width="1.500"/></svg></div>
        <div class="tray">
            <svg width="9" height="5" viewBox="0 0 9 5"><path d="M0 5l4.500-4L9 5z" fill="#fff"/></svg>
            <svg width="16" height="16" viewBox="0 0 16 16"><path d="M2 1v14" stroke="#fff" stroke-width="1.500"/><path d="M3 2q5 2 10 0v8q-5 2-10 0z" fill="#e8edf2"/><circle cx="11" cy="11" r="4" fill="#d73837"/><path d="M9 9l4 4M13 9l-4 4" stroke="#fff" stroke-width="1.300"/></svg>
            <svg width="16" height="16" viewBox="0 0 16 16"><path d="M2 2h7v12H2z" fill="#cf3835" stroke="#f0eaea"/><path d="M9 6h5v4H9zM10 2v4M13 2v4M11.500 10v4" fill="#fff" stroke="#fff" stroke-width="1.500"/><path d="M1 5l7 9M8 5l-7 9" stroke="#8f1220" stroke-width="1.500"/></svg>
            <svg width="16" height="16" viewBox="0 0 16 16"><path d="M1.500 11v3M4.500 9v5M7.500 7v7M10.500 5v9M13.500 2v12" stroke="#fff" stroke-width="2"/></svg>
            <svg width="16" height="16" viewBox="0 0 16 16"><path d="M1 6h3l4-4v12l-4-4H1z" fill="#fff"/><path d="M10 5q2 3 0 6M12 3q4 5 0 10" fill="none" stroke="#fff"/></svg>
        </div>
        <div class="clock"><span>10:58 AM</span><span>1/7/2021</span></div>
        <div class="show-desktop"></div>
    </div>
</div>

<script>
    // Builds the column headers and the numbered rows of the sheet
    const sheet = document.getElementById('sheet');
    const columns = ['A', 'B', 'C', 'D', 'E', 'F', 'G', 'H', 'I'];
    const values = { A1: 'items', B1: 'quntit' };

    function addCell(text, className) {
        const cell = document.createElement('div');
        cell.className = className;
        cell.textContent = text;
        sheet.appendChild(cell);
    }

    addCell('', 'head corner');
    columns.forEach(col => addCell(col, 'head' + (col === 'B' ? ' selected' : '') + (col === 'I' ? ' cut' : '')));

    for (let row = 1; row <= 29; row++) {
        addCell(row, 'head number' + (row === 1 ? ' selected' : ''));
        columns.forEach(col => addCell(values[col + row] || '', 'cell'));
    }
</script>
</body>
</html>
```

FILE: styles.css
```css
* {
    margin: 0;
    padding: 0;
    box-sizing: border-box;
}

body {
    background-color: #000;
    font-family: "Open Sans", "Noto Sans", sans-serif;
    font-size: 11px;
    line-height: 14px;
    letter-spacing: -0.1px;
    color: #2c2433;
    overflow: hidden;
}

svg {
    display: block;
    flex: none;
    overflow: visible;
    letter-spacing: 0;
}

u {
    text-underline-offset: 1px;
}

.window {
    width: 960px;
    height: 720px;
    margin: 0 auto;
    display: flex;
    flex-direction: column;
    background-color: #efefef;
    overflow: hidden;
}

/* Title bar */
.titlebar {
    height: 21px;
    display: flex;
    align-items: center;
    padding: 0 2px 2px 4px;
    border-top: 1px solid #1d3552;
    background: linear-gradient(#94afce, #a2c0db 50%, #aac9e1);
}

.title {
    margin-left: 6px;
    color: #202c3d;
}

.win-buttons {
    display: flex;
    gap: 3px;
    margin-left: auto;
}

.win-btn {
    width: 28px;
    height: 16px;
    display: flex;
    align-items: center;
    justify-content: center;
    border: 1px solid #5f7894;
    border-radius: 2px;
    background: linear-gradient(#c9daea, #a5bed7 50%, #8dacca 51%, #b1cbe1);
    box-shadow: inset 0 0 0 1px rgba(255, 255, 255, 0.4);
}

.win-btn.close {
    border-color: #6a2630;
    background: linear-gradient(#dd9a89, #c95a45 50%, #b53420 51%, #d3705a);
}

/* Menu bar */
.menubar {
    height: 25px;
    display: flex;
    align-items: center;
    padding: 1px 7px 0 6px;
    gap: 10.900px;
    background: linear-gradient(#fff 0, #f0f2fb 7px, #dadff2 8px, #d9def1 20px, #e7eaf8);
    border-bottom: 1px solid #a8acbc;
    color: #393047;
    letter-spacing: -0.200px;
}

.doc-close {
    margin: 0 0 2px auto;
}

/* Toolbars */
.toolbar {
    display: flex;
    align-items: center;
    background: linear-gradient(#e1e5f7, #d4d9ef 50%, #dbe0f4);
}

.standard {
    height: 29px;
    padding-bottom: 1px;
    border-top: 1px solid #fff;
    border-bottom: 1px solid #a8acbc;
}

.formatting {
    height: 30px;
    padding: 0 0 2px 1px;
    border-top: 1px solid #fff;
    border-bottom: 1px solid #8c8f9c;
}

.drawing {
    height: 30px;
    padding-left: 1px;
    background: linear-gradient(#fdfdff, #e9ebfa 30%, #d9dbef 50%, #e2e3f5);
    border-bottom: 2px solid #a9a9ae;
}

.grip {
    flex: none;
    width: 3px;
    height: 20px;
    margin: 0 4.300px 0 3px;
    background: repeating-linear-gradient(#7f8498 0 1px, transparent 1px 3px);
    border-right: 1px solid #fff;
}

.formatting .grip, .drawing .grip {
    margin-left: 2px;
    margin-right: 5.300px;
}

.ic {
    flex: none;
    width: 23.230px;
    height: 22px;
    display: flex;
    align-items: center;
    justify-content: center;
}

.ic svg {
    width: 20px;
    height: 20px;
}

.off {
    opacity: 0.5;
}

.pressed {
    background-color: #c9cee0;
    border: 1px solid #6e7487;
    border-radius: 3px;
}

.dd {
    flex: none;
    width: 11px;
    display: flex;
    justify-content: center;
}

.dd::before {
    content: "";
    border: 2.500px solid transparent;
    border-top: 3px solid #111;
    border-bottom: 0;
}

.sep {
    flex: none;
    width: 7.800px;
    height: 16px;
    background: linear-gradient(#bcc1d5, #bcc1d5) center / 1px 100% no-repeat;
}

.overflow {
    flex: none;
    width: 9px;
    height: 24px;
    margin-left: 6px;
    display: flex;
    align-items: flex-end;
    justify-content: center;
    padding-bottom: 4px;
    background: linear-gradient(#d9dbe0, #a5a6ab);
}

.overflow::before {
    content: "";
    border: 2.500px solid transparent;
    border-top: 3px solid #111;
    border-bottom: 0;
}

.drawing .overflow {
    margin-left: 4px;
}

.find-bar {
    display: flex;
    align-items: center;
    height: 27px;
    border-left: 1px solid #b3b7c8;
    border-right: 1px solid #b3b7c8;
}

.find-bar .grip {
    margin: 0 6px 0 4px;
}

.find-bar .combo + .ic {
    margin-left: 0;
}

.find-bar .overflow {
    margin: 0 6px 0 5px;
}

.glyph {
    font-size: 16px;
    color: #38445a;
}

.bold {
    font-weight: 800;
}

.italic {
    font-family: "Liberation Serif", serif;
    font-style: italic;
    font-weight: bold;
    font-size: 17px;
}

.underline {
    text-decoration: underline;
    font-size: 14px;
}

/* Combo boxes */
.combo {
    flex: none;
    height: 20px;
    display: flex;
    align-items: center;
    justify-content: space-between;
    padding: 0 1px 0 3px;
    background-color: #fff;
    border: 1px solid #b0b3bd;
}

.combo b {
    width: 16px;
    height: 16px;
    display: flex;
    align-items: center;
    justify-content: center;
    background: linear-gradient(#fafafa, #dcdcdc);
    border: 1px solid #777;
}

.combo b::before {
    content: "";
    border: 3.500px solid transparent;
    border-top: 4px solid #000;
    border-bottom: 0;
}

.find {
    width: 94px;
    color: #85838b;
}

.font-name {
    width: 145px;
    margin-left: 7px;
}

.font-size {
    width: 57px;
    margin: 0 8px 0 7px;
    padding-left: 2px;
}

/* Document area */
.workspace {
    height: 528px;
    display: flex;
    background-color: #efefef;
}

.document {
    width: 695px;
    display: flex;
    flex-direction: column;
}

.formula-bar {
    height: 31px;
    display: flex;
    align-items: center;
    padding: 0 3px 0 6px;
}

.name-box {
    width: 118px;
    margin-right: 7px;
}

.formula-bar .ic {
    width: 23.700px;
}

.formula-input {
    width: 483px;
    height: 20px;
    margin-left: 8px;
    padding: 2px 3px;
    background-color: #fff;
    border: 1px solid #c5c5c5;
    border-top: 2px solid #777;
    border-left-color: #777;
}

.sheet-area {
    height: 480px;
    display: flex;
    border-top: 1px solid #777;
    border-left: 1px solid #999;
}

.sheet {
    width: 677px;
    display: grid;
    grid-template-columns: 32px repeat(9, 75.950px);
    grid-template-rows: 17px repeat(29, 15.930px);
    overflow: hidden;
    background-color: #fff;
    font-size: 11.500px;
}

.head {
    display: flex;
    align-items: center;
    justify-content: center;
    background: linear-gradient(#fafafa, #ececec);
    border-right: 1px solid #8b8b8b;
    border-bottom: 1px solid #8b8b8b;
}

.head.number {
    background: #f2f2f2;
    border-bottom-color: #b5b5b5;
}

.head.selected {
    background: linear-gradient(#6cb2f5, #3a93ee 50%, #4b9ff1);
    color: #fff;
    font-weight: bold;
}

.head.cut {
    color: #a33;
}

.cell {
    padding-left: 1px;
    line-height: 15px;
    border-right: 1px solid #c0c0c0;
    border-bottom: 1px solid #c0c0c0;
}

/* Scrollbars */
.vscroll {
    width: 15px;
    display: flex;
    flex-direction: column;
    align-items: center;
    background-color: #f0f0f0;
    border-left: 1px solid #b5b5b5;
}

.split {
    width: 15px;
    height: 2px;
    background-color: #000;
}

.arrow {
    flex: none;
    border: 3px solid transparent;
}

.arrow.up {
    border-top: 0;
    border-bottom: 3px solid #333;
}

.arrow.down {
    border-bottom: 0;
    border-top: 3px solid #333;
    margin-top: auto;
}

.arrow.left {
    border-left: 0;
    border-right: 3px solid #333;
}

.arrow.right {
    border-right: 0;
    border-left: 3px solid #333;
    margin-left: auto;
}

.thumb {
    flex: none;
    width: 13px;
    display: flex;
    align-items: center;
    justify-content: center;
    background: linear-gradient(90deg, #f5f5f5, #d9d9da 50%, #b8b8bb);
    border: 1px solid #8e8e90;
    border-radius: 1px;
}

.thumb::before {
    content: "";
    width: 7px;
    height: 7px;
    background: repeating-linear-gradient(#555 0 1px, transparent 1px 3px);
}

.vscroll .arrow.up {
    margin: 7px 0;
}

.vscroll .thumb {
    height: 213px;
}

.vscroll .arrow.down {
    margin-bottom: 6px;
}

/* Sheet tabs */
.tabs-row {
    height: 16px;
    display: flex;
    align-items: center;
    padding: 0 0 1px 3px;
    background-color: #efefef;
    border-top: 1px solid #888;
}

.nav-btn {
    width: 14px;
    height: 13px;
    margin-right: 2px;
    border: 1px solid #555;
    border-radius: 2px;
    background-color: #f7f7f7;
}

.nav-btn svg {
    width: 12px;
    height: 11px;
    fill: #111;
    stroke: #111;
}

.tabs {
    position: relative;
    width: 185px;
    height: 15px;
    margin-left: 1px;
    display: flex;
}

.tab-lines {
    position: absolute;
    top: 0;
    left: 0;
}

.tab {
    position: relative;
    line-height: 14px;
}

.t4 {
    width: 41px;
    padding-left: 8px;
    margin-right: 10px;
}

.tab.active {
    width: 38px;
    font-weight: bold;
    margin-right: 11px;
    color: #111;
}

.t2 {
    width: 36px;
    margin-right: 10px;
}

.cursor {
    position: absolute;
    left: 78px;
    top: 1px;
    z-index: 2;
}

.hscroll {
    width: 425px;
    height: 15px;
    display: flex;
    align-items: center;
    padding: 0 6px 0 7px;
    border-right: 3px solid #000;
}

.hthumb {
    width: 170px;
    height: 13px;
    margin-left: 7px;
    display: flex;
    align-items: center;
    justify-content: center;
    border: 1px solid #999;
    border-radius: 1px;
    background: linear-gradient(#f8f8f8, #d8d8d8 60%, #c6c6c6);
}

.hthumb::before {
    content: "";
    width: 7px;
    height: 6px;
    background: repeating-linear-gradient(90deg, #555 0 1px, transparent 1px 3px);
}

.splitter {
    width: 7px;
    display: flex;
    align-items: center;
    justify-content: center;
    border-left: 1px solid #ccc;
    border-right: 1px solid #a3a3a3;
}

.splitter i {
    width: 2px;
    height: 31px;
    background: repeating-linear-gradient(#888 0 2px, transparent 2px 5px);
}

/* Sidebar */
.sidebar {
    width: 257px;
    display: flex;
    border-top: 1px solid #b9b9b9;
    border-right: 1px solid #999;
    border-bottom: 1px solid #999;
}

.panel {
    width: 220px;
    display: flex;
    flex-direction: column;
    padding: 3px 0 0 3px;
}

.panel-title {
    height: 25px;
    display: flex;
    align-items: center;
    justify-content: space-between;
    padding: 0 5px 0 10px;
    font-size: 11.500px;
    letter-spacing: -0.420px;
    font-weight: bold;
    color: #222;
}

.panel-body {
    height: 496px;
    display: flex;
}

.panel-content {
    width: 200px;
    display: flex;
    flex-direction: column;
    align-items: flex-start;
}

.pscroll {
    width: 15px;
    display: flex;
    flex-direction: column;
    align-items: center;
    border-left: 1px solid #ccc;
}

.pscroll .arrow.up {
    margin: 6px 0 7px;
}

.pscroll .thumb {
    height: 434px;
}

.pscroll .arrow.down {
    margin-bottom: 7px;
}

.section-title {
    width: 200px;
    height: 26px;
    flex: none;
    display: flex;
    align-items: center;
    padding: 0 4px 0 6px;
    margin-top: 5px;
    background: linear-gradient(90deg, #eee, #e2e2e2 50%, #e8e8e8);
    font-size: 11.500px;
    letter-spacing: -0.520px;
    font-weight: bold;
}

.section-title.first {
    margin-top: 0;
}

.minus {
    width: 8px;
    height: 8px;
    margin-right: 5px;
    border: 1px solid #777;
    background: linear-gradient(#555, #555) center / 4px 1px no-repeat #fff;
}

.more {
    width: 11px;
    height: 9px;
    margin-left: auto;
    margin-bottom: 2px;
    border: 1px solid #5878a4;
    border-top-width: 2px;
    background: linear-gradient(90deg, #567 1px, transparent 1px) 1px 4px / 2px 1px repeat-x #fff;
}

.row {
    display: flex;
    flex: none;
}

.group {
    display: flex;
    align-items: center;
    height: 29px;
    background: linear-gradient(#f4f4f6, #fcfcfc);
    border: 1px solid #e5e5e5;
}

.fonts {
    margin: 1px 0 0 6px;
    gap: 6px;
}

.side-font {
    width: 132px;
}

.side-size {
    width: 48px;
}

.styles-row {
    margin: 8px 0 0 6px;
    gap: 7px;
}

.styles-row.second {
    margin-top: 10px;
}

.strike {
    font-size: 7.500px;
    font-weight: bold;
    text-decoration: line-through;
}

.g-style {
    width: 131px;
    padding-left: 1px;
}

.g-size {
    width: 50px;
}

.g-super {
    width: 50px;
    padding-left: 1px;
}

.g-spacing {
    width: 37px;
    margin-left: 1px;
}

.g-color {
    width: 37px;
    margin-left: 10px;
}

.align-row {
    margin-left: 6px;
    margin-top: -2px;
    gap: 17px;
}

.g-align {
    width: 96px;
}

.g-align .ic {
    width: 23.500px;
}

.g-valign {
    width: 73px;
}

.indent-row {
    margin: 10px 0 0 7px;
    height: 40px;
    gap: 17px;
}

.muted {
    color: #8b8b8e;
}

.indent {
    width: 85px;
}

.indent label {
    display: block;
}

.spin {
    height: 21px;
    margin: 4px 0 0 -1px;
    display: flex;
    align-items: center;
    justify-content: space-between;
    padding: 0 2px;
    background-color: #fff;
    border: 2px solid #bac0c9;
    color: #888;
}

.spin b {
    width: 13px;
    height: 16px;
    display: flex;
    flex-direction: column;
    align-items: center;
    justify-content: space-evenly;
    border: 1px solid #bbb;
    background: linear-gradient(#eee 6px, #aaa 7px, #eee 8px);
}

.spin i {
    border: 2.500px solid transparent;
    border-top: 0;
    border-bottom: 3px solid #888;
}

.spin i + i {
    border-bottom: 0;
    border-top: 3px solid #888;
}

.checks {
    display: flex;
    flex-direction: column;
    gap: 10px;
    padding-top: 3px;
}

.checks label, .check-label {
    display: flex;
    align-items: center;
    gap: 3px;
}

.check {
    width: 12px;
    height: 12px;
    display: flex;
    justify-content: center;
    border: 1px solid #858585;
    background: linear-gradient(135deg, #ccc, #fff);
    box-shadow: inset 0 0 0 1px #f4f4f4;
}

.check.plain {
    border-color: #bbb;
    background: #fafafa;
}

.check.checked::before {
    content: "";
    width: 4px;
    height: 8px;
    border: solid #38416f;
    border-width: 0 2px 2px 0;
    transform: rotate(40deg);
}

.caption {
    flex: none;
    margin-left: 7px;
}

.orient-label {
    margin-top: 8px;
}

.orient-row {
    height: 53px;
    margin: 6px 0 0 6px;
    gap: 17px;
}

.orient-controls {
    padding-top: 7px;
}

.degrees {
    width: 124px;
    margin-bottom: 12px;
}

.section-title.third {
    margin-top: 6px;
}

.bg-label {
    margin-top: 0;
}

.g-bg {
    flex: none;
    width: 92px;
    height: 28px;
    margin: 2px 0 0 6px;
    padding-left: 6px;
}

.swatch {
    width: 52px;
    height: 11px;
    margin: 0 4px 0 1px;
    border: 1px solid #39445a;
    outline: 1px solid #9aa2b4;
    outline-offset: -3px;
    background-color: #fff;
}

.border-label {
    margin-top: 9px;
}

.border-row {
    margin: 2px 0 0 6px;
    gap: 9px;
}

.g-border {
    width: 61px;
    height: 54px;
    padding-left: 4px;
    gap: 3px;
}

.line-groups {
    display: flex;
    flex-direction: column;
    gap: 2px;
}

.line-groups .group {
    width: 93px;
    height: 29px;
    padding-left: 4px;
}

.line {
    width: 70px;
    height: 1px;
    margin: 0 4px 0 1px;
    background-color: #999;
}

.line-color {
    width: 53px;
    height: 10px;
    margin: 0 4px 0 2px;
    border: 1px solid #aaa;
    background-color: #f3f3f3;
}

.grid-check {
    margin: 5px 0 0 7px;
    flex: none;
}

/* Sidebar deck buttons */
.deck {
    width: 36px;
    display: flex;
    flex-direction: column;
    align-items: center;
    padding: 7px 0 0 2px;
}

.deck-menu {
    margin-bottom: 14px;
}

.deck-btn {
    flex: none;
    width: 28px;
    height: 28px;
    margin-bottom: 4.600px;
    display: flex;
    align-items: center;
    justify-content: center;
    border: 1px solid transparent;
    border-radius: 3px;
}

.deck-btn.selected {
    border-color: #bbb;
    background-color: #e2e2e2;
}

.deck-btn svg {
    width: 22px;
    height: 22px;
}

/* Status bar */
.statusbar {
    height: 20px;
    display: flex;
    align-items: center;
    background-color: #f0f0f0;
}

.statusbar > * {
    flex: none;
    height: 16px;
    line-height: 16px;
    border-right: 1px solid #aaa;
}

.st-sheet {
    width: 227px;
    padding-left: 9px;
}

.st-style {
    width: 206px;
    padding-left: 5px;
}

.st-insert {
    width: 51px;
    text-align: center;
    padding-right: 3px;
}

.st-std {
    width: 32px;
    padding-left: 4px;
}

.st-mod {
    width: 15px;
    padding-left: 3px;
}

.st-sign {
    width: 27px;
}

.st-sum {
    width: 216px;
    padding-right: 4px;
    text-align: center;
}

.st-zoom {
    width: 143px;
    padding: 1px 0 0 3px;
}

.statusbar .st-pct {
    padding-left: 4px;
    border-right: 0;
}

/* Taskbar */
.taskbar {
    height: 37px;
    display: flex;
    align-items: center;
    padding-right: 2px;
    border-top: 1px solid #75889e;
    background: linear-gradient(90deg, #8197b4, #91acc9 18%, #a2bfdf 65%, #a0bddc 77%, #7c92a9 81%, #75899f);
}

.start {
    width: 53px;
    padding-left: 7px;
}

.pin {
    width: 60px;
    display: flex;
    justify-content: center;
}

.pin.media {
    width: 58px;
    padding-right: 3px;
}

.task {
    width: 56px;
    height: 36px;
    margin-right: 2px;
    display: flex;
    align-items: center;
    justify-content: center;
    border: 1px solid #526981;
    border-radius: 3px;
    background: linear-gradient(135deg, #ccd9e6, #a8bfd6 50%, #b3cbe0);
    box-shadow: inset 0 0 0 1px rgba(255, 255, 255, 0.6);
}

.task.stacked {
    box-shadow: inset 0 0 0 1px rgba(255, 255, 255, 0.6), inset -4px 0 0 #a4bad0, inset -5px 0 0 #5b7187;
    padding-right: 4px;
}

.task.current {
    background: linear-gradient(135deg, #f4f8fb, #cbdbe8 50%, #d9e7f1);
}

.tray {
    display: flex;
    align-items: center;
    gap: 7px;
    margin-left: auto;
}

.tray svg:first-child {
    margin-right: 4px;
}

.clock {
    width: 60px;
    margin: 0 4px 0 8px;
    display: flex;
    flex-direction: column;
    align-items: center;
    line-height: 16px;
    color: #fff;
}

.show-desktop {
    width: 12px;
    height: 36px;
    border: 1px solid #4c6176;
    background: linear-gradient(90deg, #75889c, #a1b2c3);
}
```
